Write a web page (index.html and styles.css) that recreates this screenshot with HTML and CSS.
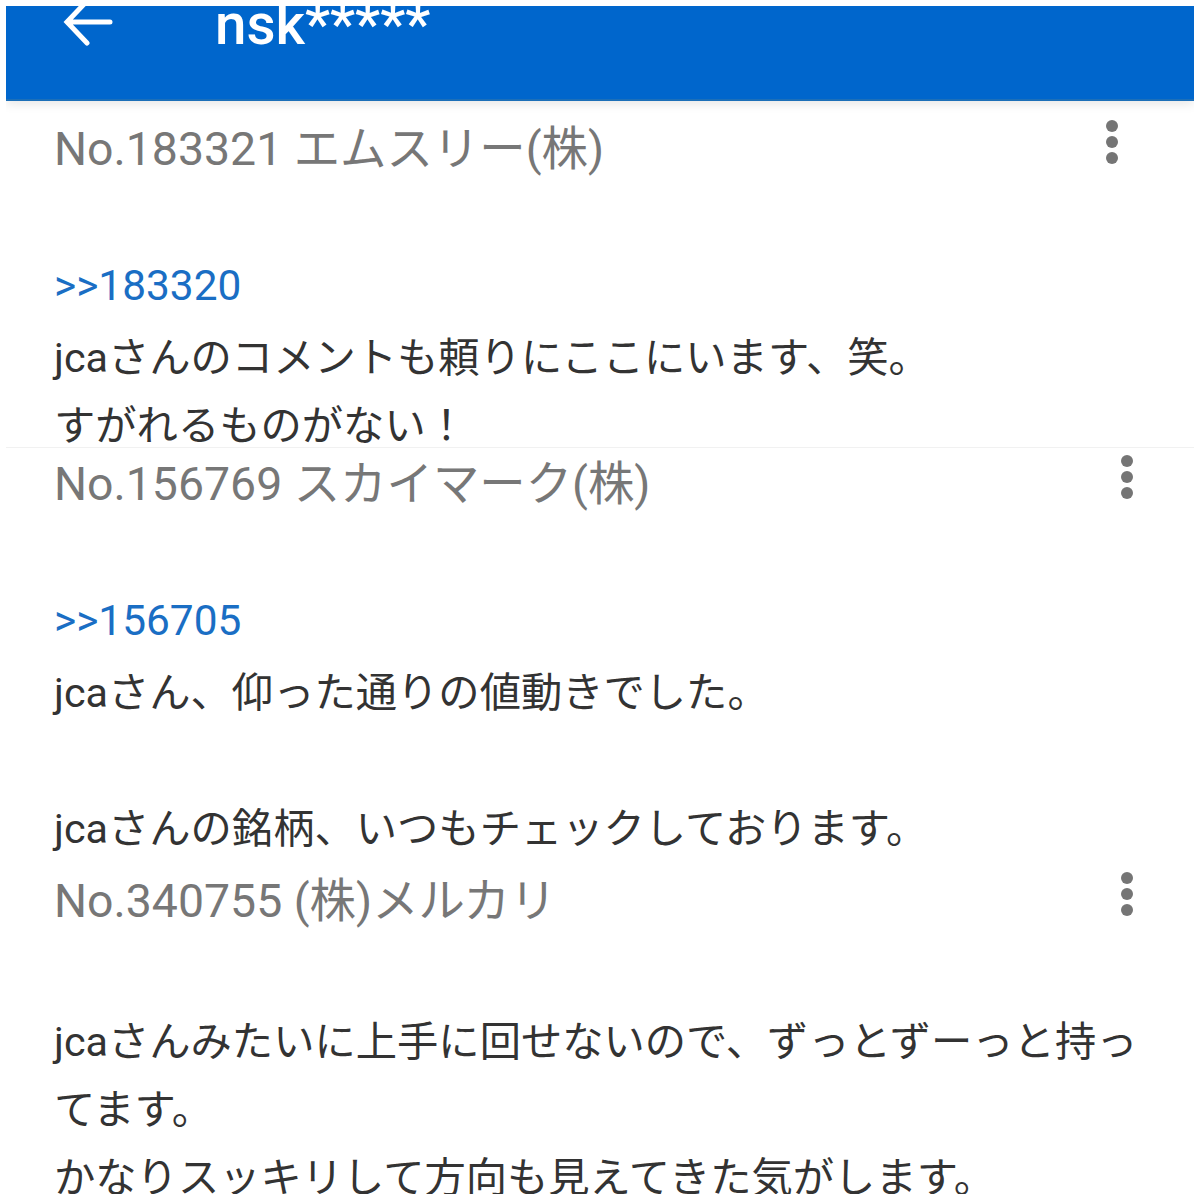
FILE: index.html
```html
<!DOCTYPE html>
<html lang="ja">
<head>
<meta charset="utf-8">
<title>nsk*****</title>
<link rel="stylesheet" href="styles.css">
</head>
<body>
<div class="frame">
  <header class="appbar">
    <svg class="back" width="60" height="60" viewBox="0 0 60 60" aria-hidden="true">
      <path d="M50 32H8 M27 11L7 32L27 53" fill="none" stroke="#fff" stroke-width="5" stroke-linecap="round" stroke-linejoin="miter"/>
    </svg>
    <h1 class="appbar-title">nsk*****</h1>
  </header>

  <section class="post post--first">
    <div class="post-head post-head--wide">
      <div class="post-title">No.183321 エムスリー(株)</div>
      <svg class="dots" width="16" height="46" viewBox="0 0 16 46" aria-hidden="true">
        <circle cx="8" cy="7" r="6"/><circle cx="8" cy="23" r="6"/><circle cx="8" cy="39" r="6"/>
      </svg>
    </div>
    <div class="post-body">
      <div class="reply">&gt;&gt;183320</div>
      <p class="text">jcaさんのコメントも頼りにここにいます、笑。<br>すがれるものがない！</p>
    </div>
  </section>

  <section class="post post--second">
    <div class="post-head">
      <div class="post-title">No.156769 スカイマーク(株)</div>
      <svg class="dots" width="16" height="46" viewBox="0 0 16 46" aria-hidden="true">
        <circle cx="8" cy="7" r="6"/><circle cx="8" cy="23" r="6"/><circle cx="8" cy="39" r="6"/>
      </svg>
    </div>
    <div class="post-body">
      <div class="reply">&gt;&gt;156705</div>
      <p class="text">jcaさん、仰った通りの値動きでした。<br><br>jcaさんの銘柄、いつもチェックしております。</p>
    </div>
  </section>

  <section class="post post--third">
    <div class="post-head">
      <div class="post-title">No.340755 (株)メルカリ</div>
      <svg class="dots" width="16" height="46" viewBox="0 0 16 46" aria-hidden="true">
        <circle cx="8" cy="7" r="6"/><circle cx="8" cy="23" r="6"/><circle cx="8" cy="39" r="6"/>
      </svg>
    </div>
    <div class="post-body post-body--nolink">
      <p class="text">jcaさんみたいに上手に回せないので、ずっとずーっと持ってます。<br>かなりスッキリして方向も見えてきた気がします。</p>
    </div>
  </section>
</div>
</body>
</html>
```

FILE: styles.css
```css
html, body {
  margin: 0;
  padding: 0;
  background: #ffffff;
}

body {
  font-family: Roboto, "Noto Sans CJK JP", sans-serif;
}

.frame {
  width: 1188px;
  height: 1188px;
  margin: 6px;
  overflow: hidden;
  background: #ffffff;
  display: flex;
  flex-direction: column;
}

.appbar {
  flex: 0 0 auto;
  height: 93px;
  background: #0066cc;
  border-bottom: 2px solid #1c6fb8;
  display: flex;
  align-items: flex-start;
  padding-left: 54px;
  overflow: hidden;
  position: relative;
  z-index: 1;
  box-shadow: 0 3px 10px rgba(0, 0, 0, 0.10);
}

.back {
  flex: 0 0 auto;
  margin-top: -16px;
  overflow: visible;
}

.appbar-title {
  margin: -9px 0 0 95px;
  font-family: Roboto, sans-serif;
  font-weight: 500;
  font-size: 56.5px;
  line-height: 56px;
  color: #ffffff;
  letter-spacing: 0;
}

.post {
  flex: 0 0 auto;
  padding-left: 48px;
  padding-top: 4px;
  overflow: hidden;
  box-sizing: border-box;
}

.post--first {
  height: 346px;
  padding-top: 16px;
}

.post--second {
  height: 418px;
  border-top: 1px solid #f1f1f1;
}

.post--third {
  flex: 1 1 auto;
}

.post-head {
  display: flex;
  justify-content: space-between;
  align-items: flex-start;
  padding-right: 59px;
  height: 64px;
}

.post-head--wide {
  padding-right: 74px;
}

.post-title {
  font-size: 46.4px;
  line-height: 64px;
  color: #777777;
  white-space: nowrap;
}

.dots {
  flex: 0 0 auto;
  fill: #757575;
  margin-top: 2px;
}

.post-body {
  margin-top: 71px;
  width: 1100px;
}

.post-body--nolink {
  margin-top: 75px;
}

.reply {
  font-size: 42.4px;
  line-height: 68px;
  color: #1a6ec4;
  margin-bottom: 4px;
}

.text {
  margin: 0;
  font-size: 41.3px;
  line-height: 68px;
  color: #333333;
}
```
